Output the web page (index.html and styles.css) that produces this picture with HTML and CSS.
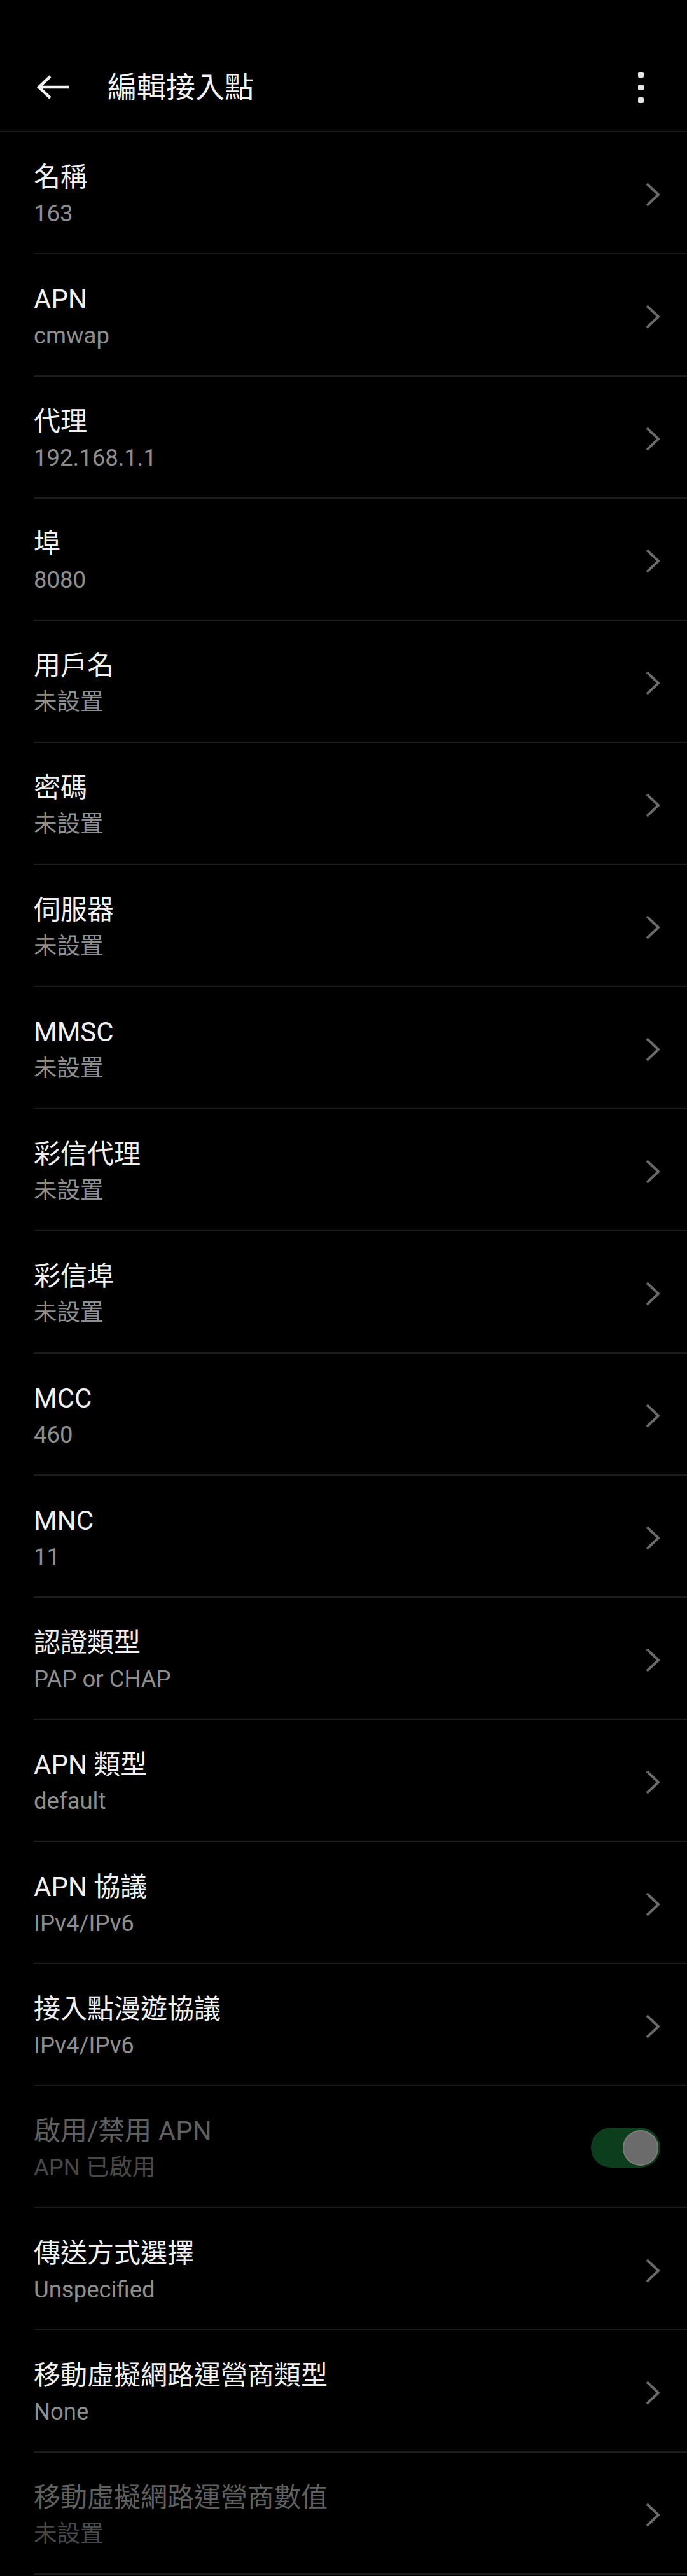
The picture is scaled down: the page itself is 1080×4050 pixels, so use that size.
FILE: index.html
```html
<!DOCTYPE html>
<html lang="zh-Hant">
<head>
<meta charset="utf-8">
<title>編輯接入點</title>
<link rel="stylesheet" href="styles.css">
</head>
<body>
<header class="appbar">
  <div class="toolbar">
    <svg class="back" width="54" height="40" viewBox="0 0 54 40"><path d="M51 20H5M22 3L4 20L22 37" fill="none" stroke="#f2f2f2" stroke-width="4.5" stroke-linejoin="miter"/></svg>
    <h1 class="title">編輯接入點</h1>
    <div class="more"><span></span><span></span><span></span></div>
  </div>
</header>
<main class="list">
  <div class="row"><div class="text"><div class="label">名稱</div><div class="value">163</div></div><svg class="chev" width="28" height="40" viewBox="0 0 28 40"><path d="M5 3L23 20L5 37" fill="none" stroke="#6a6a6a" stroke-width="4"/></svg></div>
  <div class="row"><div class="text"><div class="label">APN</div><div class="value">cmwap</div></div><svg class="chev" width="28" height="40" viewBox="0 0 28 40"><path d="M5 3L23 20L5 37" fill="none" stroke="#6a6a6a" stroke-width="4"/></svg></div>
  <div class="row"><div class="text"><div class="label">代理</div><div class="value">192.168.1.1</div></div><svg class="chev" width="28" height="40" viewBox="0 0 28 40"><path d="M5 3L23 20L5 37" fill="none" stroke="#6a6a6a" stroke-width="4"/></svg></div>
  <div class="row"><div class="text"><div class="label">埠</div><div class="value">8080</div></div><svg class="chev" width="28" height="40" viewBox="0 0 28 40"><path d="M5 3L23 20L5 37" fill="none" stroke="#6a6a6a" stroke-width="4"/></svg></div>
  <div class="row"><div class="text"><div class="label">用戶名</div><div class="value">未設置</div></div><svg class="chev" width="28" height="40" viewBox="0 0 28 40"><path d="M5 3L23 20L5 37" fill="none" stroke="#6a6a6a" stroke-width="4"/></svg></div>
  <div class="row"><div class="text"><div class="label">密碼</div><div class="value">未設置</div></div><svg class="chev" width="28" height="40" viewBox="0 0 28 40"><path d="M5 3L23 20L5 37" fill="none" stroke="#6a6a6a" stroke-width="4"/></svg></div>
  <div class="row"><div class="text"><div class="label">伺服器</div><div class="value">未設置</div></div><svg class="chev" width="28" height="40" viewBox="0 0 28 40"><path d="M5 3L23 20L5 37" fill="none" stroke="#6a6a6a" stroke-width="4"/></svg></div>
  <div class="row"><div class="text"><div class="label">MMSC</div><div class="value">未設置</div></div><svg class="chev" width="28" height="40" viewBox="0 0 28 40"><path d="M5 3L23 20L5 37" fill="none" stroke="#6a6a6a" stroke-width="4"/></svg></div>
  <div class="row"><div class="text"><div class="label">彩信代理</div><div class="value">未設置</div></div><svg class="chev" width="28" height="40" viewBox="0 0 28 40"><path d="M5 3L23 20L5 37" fill="none" stroke="#6a6a6a" stroke-width="4"/></svg></div>
  <div class="row"><div class="text"><div class="label">彩信埠</div><div class="value">未設置</div></div><svg class="chev" width="28" height="40" viewBox="0 0 28 40"><path d="M5 3L23 20L5 37" fill="none" stroke="#6a6a6a" stroke-width="4"/></svg></div>
  <div class="row"><div class="text"><div class="label">MCC</div><div class="value">460</div></div><svg class="chev" width="28" height="40" viewBox="0 0 28 40"><path d="M5 3L23 20L5 37" fill="none" stroke="#6a6a6a" stroke-width="4"/></svg></div>
  <div class="row"><div class="text"><div class="label">MNC</div><div class="value">11</div></div><svg class="chev" width="28" height="40" viewBox="0 0 28 40"><path d="M5 3L23 20L5 37" fill="none" stroke="#6a6a6a" stroke-width="4"/></svg></div>
  <div class="row"><div class="text"><div class="label">認證類型</div><div class="value">PAP or CHAP</div></div><svg class="chev" width="28" height="40" viewBox="0 0 28 40"><path d="M5 3L23 20L5 37" fill="none" stroke="#6a6a6a" stroke-width="4"/></svg></div>
  <div class="row"><div class="text"><div class="label">APN 類型</div><div class="value">default</div></div><svg class="chev" width="28" height="40" viewBox="0 0 28 40"><path d="M5 3L23 20L5 37" fill="none" stroke="#6a6a6a" stroke-width="4"/></svg></div>
  <div class="row"><div class="text"><div class="label">APN 協議</div><div class="value">IPv4/IPv6</div></div><svg class="chev" width="28" height="40" viewBox="0 0 28 40"><path d="M5 3L23 20L5 37" fill="none" stroke="#6a6a6a" stroke-width="4"/></svg></div>
  <div class="row"><div class="text"><div class="label">接入點漫遊協議</div><div class="value">IPv4/IPv6</div></div><svg class="chev" width="28" height="40" viewBox="0 0 28 40"><path d="M5 3L23 20L5 37" fill="none" stroke="#6a6a6a" stroke-width="4"/></svg></div>
  <div class="row disabled"><div class="text"><div class="label">啟用/禁用 APN</div><div class="value">APN 已啟用</div></div><div class="switch"><span class="knob"></span></div></div>
  <div class="row"><div class="text"><div class="label">傳送方式選擇</div><div class="value">Unspecified</div></div><svg class="chev" width="28" height="40" viewBox="0 0 28 40"><path d="M5 3L23 20L5 37" fill="none" stroke="#6a6a6a" stroke-width="4"/></svg></div>
  <div class="row"><div class="text"><div class="label">移動虛擬網路運營商類型</div><div class="value">None</div></div><svg class="chev" width="28" height="40" viewBox="0 0 28 40"><path d="M5 3L23 20L5 37" fill="none" stroke="#6a6a6a" stroke-width="4"/></svg></div>
  <div class="row disabled"><div class="text"><div class="label">移動虛擬網路運營商數值</div><div class="value">未設置</div></div><svg class="chev" width="28" height="40" viewBox="0 0 28 40"><path d="M5 3L23 20L5 37" fill="none" stroke="#6a6a6a" stroke-width="4"/></svg></div>
</main>
</body>
</html>
```
FILE: styles.css
```css
html, body {
  margin: 0;
  padding: 0;
  background: #000;
}
body {
  font-family: Roboto, "Noto Sans CJK TC", sans-serif;
  color: #f0f0f0;
}
.appbar {
  box-sizing: border-box;
  height: 208px;
  padding-top: 107px;
  border-bottom: 2px solid #1f1f1f;
}
.toolbar {
  height: 60px;
  display: flex;
  align-items: center;
  padding-left: 57px;
  padding-right: 68px;
}
.back {
  display: block;
  flex: none;
}
.title {
  margin: 0 0 0 58px;
  font-size: 46px;
  font-weight: 400;
  line-height: 60px;
  color: #f4f4f4;
  flex: 1;
}
.more {
  display: flex;
  flex-direction: column;
  gap: 11px;
  align-items: center;
}
.more span {
  display: block;
  width: 9px;
  height: 9px;
  border-radius: 2px;
  background: #e6e6e6;
}
.list {
  display: flex;
  flex-direction: column;
}
.row {
  box-sizing: border-box;
  height: 192px;
  margin-left: 53px;
  padding-top: 46px;
  padding-right: 40px;
  border-bottom: 2px solid #1c1c1c;
  display: flex;
  align-items: flex-start;
}
.text {
  flex: 1;
  min-width: 0;
}
.label {
  font-size: 42px;
  line-height: 50px;
  color: #f0f0f0;
}
.value {
  margin-top: 10px;
  font-size: 36.5px;
  line-height: 44px;
  color: #8e8e8e;
}
.chev {
  display: block;
  flex: none;
  margin-top: 32px;
}
.disabled .label {
  color: #5f5f5f;
}
.disabled .value {
  color: #484848;
}
.switch {
  flex: none;
  box-sizing: border-box;
  width: 109px;
  height: 63px;
  margin-top: 19px;
  margin-right: 2px;
  border-radius: 32px;
  background: #0c3d1c;
  display: flex;
  align-items: center;
  justify-content: flex-end;
  padding-right: 3px;
}
.knob {
  display: block;
  width: 56px;
  height: 56px;
  border-radius: 50%;
  background: #6b6b6b;
  box-shadow: inset 0 0 0 2px #7a7a7a;
}
```
